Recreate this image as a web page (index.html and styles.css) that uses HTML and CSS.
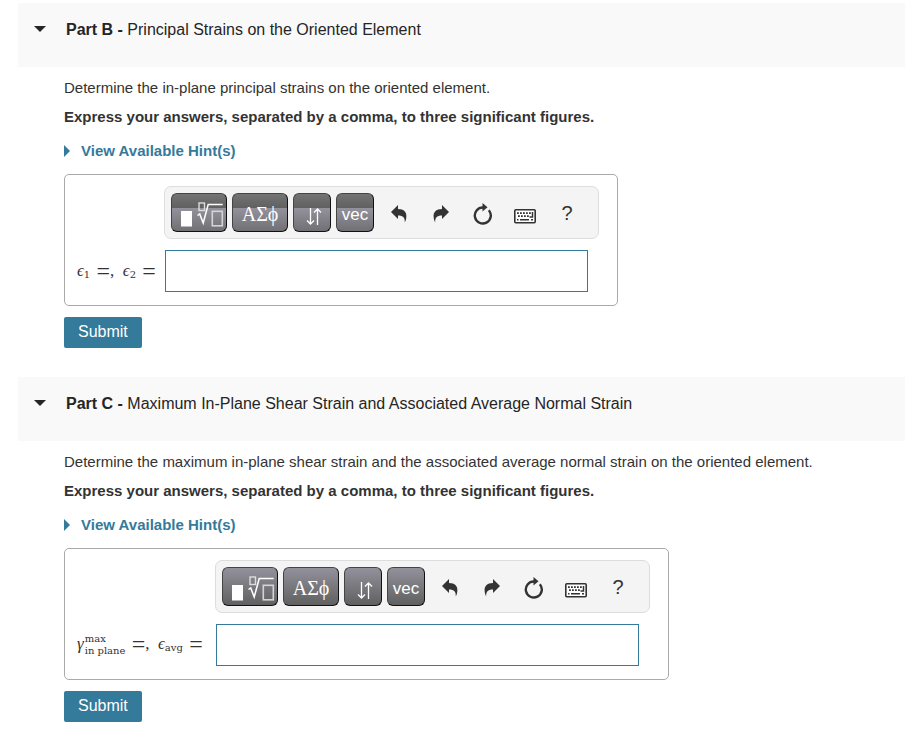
FILE: index.html
```html
<!DOCTYPE html>
<html lang="en">
<head>
  <meta charset="UTF-8">
  <title>Strain Transformation</title>
  <meta name="viewport" content="width=device-width, initial-scale=1">
  <link rel="stylesheet" href="styles.css">
</head>
<body>
  <!-- shared toolbar icons -->
  <svg class="sprite" aria-hidden="true">
    <symbol id="i-root" viewBox="0 0 54 37">
      <rect x="9" y="17" width="11" height="15.500" fill="#fff"/>
      <rect x="27" y="9" width="5.500" height="7.500" fill="none" stroke="#ddd" stroke-width="1.400"/>
      <path d="M25.500 21.500l2.200-1.500 3.500 9 5-18.500h14.500" fill="none" stroke="#fff" stroke-width="1.500"/>
      <rect x="40.300" y="17.300" width="10" height="14.500" fill="none" stroke="#d4d4d8" stroke-width="1.600"/>
    </symbol>
    <symbol id="i-arrows" viewBox="0 0 36 37">
      <path d="M16.500 14v16M13 26.500l3.500 3.500 3.500-3.500M23.500 31V15M20 18.500l3.500-3.500 3.500 3.500" fill="none" stroke="#fff" stroke-width="1.300"/>
    </symbol>
    <symbol id="i-undo" viewBox="0 0 16 18">
      <path d="M0 7L7 0v4c6 0 9 3 8.300 8.500-.2 2-.7 3.500-1.500 5 .3-4.500-1.500-7-6.800-7V14z" fill="#333"/>
    </symbol>
    <symbol id="i-redo" viewBox="0 0 16 18">
      <path d="M16 7L9 0v4c-6 0-9 3-8.300 8.500.2 2 .7 3.500 1.500 5-.3-4.500 1.500-7 6.800-7V14z" fill="#333"/>
    </symbol>
    <symbol id="i-reset" viewBox="0 0 20 22">
      <path d="M15.800 7.200A8 8 0 1 1 10 4.500" fill="none" stroke="#333" stroke-width="2.400"/>
      <path d="M9.500 0l5 4.300-5 4.200z" fill="#333"/>
    </symbol>
    <symbol id="i-keys" viewBox="0 0 22 15">
      <rect x=".8" y=".8" width="20.400" height="13" rx="1" fill="#fff" stroke="#333" stroke-width="1.600"/>
      <path d="M3 4.200h14M4 7.200h12" stroke="#333" stroke-width="1.800" stroke-dasharray="1.800 1.200"/>
      <path d="M18.500 3v5h-3M6 10.800h9M3 10.800h1.500M17 10.800h2" fill="none" stroke="#333" stroke-width="1.500"/>
    </symbol>
  </svg>

  <main>
    <section class="part">
      <header class="part-header">
        <button class="toggle" type="button" aria-label="Collapse Part B" aria-expanded="true"></button>
        <h2><b>Part B -</b> Principal Strains on the Oriented Element</h2>
      </header>
      <div class="part-body">
        <p>Determine the in-plane principal strains on the oriented element.</p>
        <p class="instructions">Express your answers, separated by a comma, to three significant figures.</p>
        <a class="hints" href="#">View Available Hint(s)</a>
        <form>
          <div class="answer answer-b">
            <div class="toolbar">
              <button class="tool wide" type="button" aria-label="Templates"><svg><use href="#i-root"/></svg></button>
              <button class="tool wide greek" type="button">ΑΣϕ</button>
              <button class="tool" type="button" aria-label="Arrows"><svg><use href="#i-arrows"/></svg></button>
              <button class="tool" type="button">vec</button>
              <div class="actions">
                <button type="button" aria-label="Undo"><svg width="16" height="18"><use href="#i-undo"/></svg></button>
                <button type="button" aria-label="Redo"><svg width="16" height="18"><use href="#i-redo"/></svg></button>
                <button type="button" aria-label="Reset"><svg width="20" height="22"><use href="#i-reset"/></svg></button>
                <button class="keys" type="button" aria-label="Keyboard shortcuts"><svg width="22" height="15"><use href="#i-keys"/></svg></button>
                <button class="help" type="button">?</button>
              </div>
            </div>
            <label for="answerB"><i>ϵ</i><sub>1</sub> <span class="eq">=</span>,&nbsp; <i>ϵ</i><sub>2</sub> <span class="eq">=</span></label>
            <input id="answerB" type="text">
          </div>
          <button class="submit" type="button">Submit</button>
        </form>
      </div>
    </section>

    <section class="part">
      <header class="part-header">
        <button class="toggle" type="button" aria-label="Collapse Part C" aria-expanded="true"></button>
        <h2><b>Part C -</b> Maximum In-Plane Shear Strain and Associated Average Normal Strain</h2>
      </header>
      <div class="part-body">
        <p>Determine the maximum in-plane shear strain and the associated average normal strain on the oriented element.</p>
        <p class="instructions">Express your answers, separated by a comma, to three significant figures.</p>
        <a class="hints" href="#">View Available Hint(s)</a>
        <form>
          <div class="answer answer-c">
            <div class="toolbar">
              <button class="tool wide" type="button" aria-label="Templates"><svg><use href="#i-root"/></svg></button>
              <button class="tool wide greek" type="button">ΑΣϕ</button>
              <button class="tool" type="button" aria-label="Arrows"><svg><use href="#i-arrows"/></svg></button>
              <button class="tool" type="button">vec</button>
              <div class="actions">
                <button type="button" aria-label="Undo"><svg width="16" height="18"><use href="#i-undo"/></svg></button>
                <button type="button" aria-label="Redo"><svg width="16" height="18"><use href="#i-redo"/></svg></button>
                <button type="button" aria-label="Reset"><svg width="20" height="22"><use href="#i-reset"/></svg></button>
                <button class="keys" type="button" aria-label="Keyboard shortcuts"><svg width="22" height="15"><use href="#i-keys"/></svg></button>
                <button class="help" type="button">?</button>
              </div>
            </div>
            <label for="answerC"><i>γ</i><span class="scripts"><span>max</span><span>in plane</span></span> <span class="eq">=</span>,&nbsp; <i>ϵ</i><sub>avg</sub> <span class="eq">=</span></label>
            <input id="answerC" type="text">
          </div>
          <button class="submit" type="button">Submit</button>
        </form>
      </div>
    </section>
  </main>
</body>
</html>
```
FILE: styles.css
```css
* {
  box-sizing: border-box;
}

body {
  margin: 0;
  font-family: "Liberation Sans", Arial, sans-serif;
  font-size: 15px;
  color: #333;
  background: #fff;
}

button, input {
  font-family: inherit;
  margin: 0;
}

button {
  cursor: pointer;
}

.sprite {
  position: absolute;
  width: 0;
  height: 0;
}

main {
  padding: 3px 0 0 18px;
}

.part {
  margin-bottom: 29px;
}

.part-header {
  display: flex;
  align-items: flex-start;
  min-height: 64px;
  padding: 17px 16px 0;
  background: #f9f9f9;
}

.part-header h2 {
  margin: 0;
  font-size: 16px;
  font-weight: normal;
  line-height: 20px;
  color: #252525;
}

.toggle {
  width: 12px;
  height: 18px;
  margin-right: 20px;
  padding: 0;
  border: none;
  background: none;
}

.toggle::before {
  content: "";
  display: block;
  border: 6px solid transparent;
  border-top-color: #252525;
  border-bottom: none;
}

.part-body {
  padding: 11px 16px 0 46px;
}

.part-body p {
  margin: 0 0 9px;
  line-height: 20px;
}

.part-body .instructions {
  margin-bottom: 14px;
  font-weight: bold;
}

.hints {
  display: flex;
  align-items: center;
  gap: 11px;
  margin-bottom: 13px;
  line-height: 20px;
  font-weight: bold;
  color: #337a9b;
  text-decoration: none;
}

.hints::before {
  content: "";
  border: 6px solid transparent;
  border-left-color: #337a9b;
  border-right: none;
}

.answer {
  display: grid;
  row-gap: 11px;
  width: fit-content;
  margin-bottom: 11px;
  padding: 11px 18px 13px 12px;
  border: 1px solid #aaa;
  border-radius: 5px;
}

.answer-b {
  grid-template-columns: 87px auto;
}

.answer-c {
  grid-template-columns: 138px auto;
}

.toolbar {
  grid-column: 2;
  display: flex;
  gap: 5px;
  width: 435px;
  padding: 6px;
  border: 1px solid #ddd;
  border-radius: 7px;
  background: #f4f4f4;
}

.tool {
  width: 38px;
  height: 39px;
  padding: 4px 0 0;
  border: 1px solid #111;
  border-top-color: #444;
  border-left-color: #444;
  border-radius: 6px;
  background: linear-gradient(#747474, #606060 38%, #93919b 39%, #717074);
  color: #fff;
  font-size: 17px;
}

.answer-c .tool {
  background: linear-gradient(#93919b, #606060);
}

.tool.wide {
  width: 56px;
}

.tool.greek {
  font-family: "Liberation Serif", serif;
  font-size: 20px;
}

.tool svg {
  display: block;
  width: 100%;
  height: 100%;
}

.tool:has(svg) {
  padding: 0;
}

.actions {
  display: flex;
  gap: 2px;
}

.actions button {
  display: flex;
  align-items: center;
  justify-content: center;
  width: 40px;
  height: 39px;
  padding: 2px 0 0;
  border: none;
  background: none;
  color: #333;
}

.actions .keys {
  padding-top: 8px;
}

.actions .help {
  font-size: 20px;
}

.answer label {
  align-self: center;
  font-family: "Liberation Serif", serif;
  font-size: 17px;
  line-height: 20px;
  white-space: nowrap;
}

.answer sub {
  font-family: "DejaVu Serif", serif;
  font-size: 10px;
  line-height: 0;
  vertical-align: -2px;
}

.eq {
  margin-left: 2px;
  font-size: 24px;
  line-height: 0;
  vertical-align: -3px;
}

.scripts {
  display: inline-flex;
  flex-direction: column;
  margin-left: 1px;
  vertical-align: middle;
  font-family: "DejaVu Serif", serif;
  font-size: 10px;
  line-height: 12px;
}

.answer input {
  width: 423px;
  height: 42px;
  margin-left: 1px;
  padding: 0 8px;
  border: 1px solid #337a9b;
  background: #fff;
  font-size: 16px;
}

.submit {
  display: block;
  height: 31px;
  padding: 0 14px 2px;
  border: none;
  border-radius: 2px;
  background: #337a9b;
  color: #fff;
  font-size: 16px;
}
```
